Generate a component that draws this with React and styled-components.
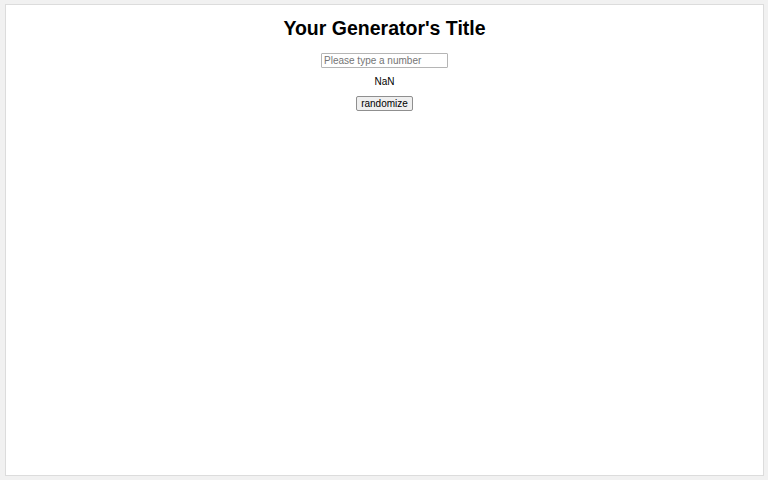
import { useState } from 'react';
import styled, { createGlobalStyle } from 'styled-components';

const GlobalStyle = createGlobalStyle`
    html, body {
        margin: 0;
        padding: 0;
        height: 100%;
        background: #f1f1f1;
        font-family: 'Liberation Sans', Arial, sans-serif;
    }
    #root {
        height: 100%;
    }
`;

const Page = styled.div`
    box-sizing: border-box;
    height: 100vh;
    padding: 4px 4px 4px 5px;
    display: flex;
`;

const Card = styled.div`
    flex: 1;
    background: #ffffff;
    border: 1px solid #dcdcdc;
    display: flex;
    flex-direction: column;
    align-items: center;
    padding-top: 12px;
`;

const Title = styled.h1`
    margin: 0;
    font-size: 19.5px;
    font-weight: 700;
    color: #000;
    line-height: 23px;
`;

const Input = styled.input`
    margin-top: 13px;
    box-sizing: border-box;
    width: 127px;
    height: 15px;
    padding: 0 2px;
    font-family: 'Liberation Sans', Arial, sans-serif;
    font-size: 10px;
    border: 1px solid #b5b5b5;
    border-radius: 1px;
    outline: none;

    &::placeholder {
        color: #757575;
    }
`;

const Result = styled.p`
    margin: 8px 0 0;
    font-size: 10px;
    line-height: 12px;
    color: #000;
`;

const Button = styled.button`
    margin-top: 8px;
    box-sizing: border-box;
    height: 15px;
    padding: 0 4px;
    font-family: 'Liberation Sans', Arial, sans-serif;
    font-size: 10px;
    line-height: 12px;
    color: #000;
    background: #efefef;
    border: 1px solid #8f8f8f;
    border-radius: 2px;
    cursor: pointer;
`;

const App = () => {
    const [value, setValue] = useState('');
    const [result, setResult] = useState(NaN);

    const randomize = () => {
        const max = parseInt(value, 10);
        setResult(Math.floor(Math.random() * max));
    };

    return (
        <>
            <GlobalStyle />
            <Page>
                <Card>
                    <Title>Your Generator's Title</Title>
                    <Input
                        type="text"
                        placeholder="Please type a number"
                        value={value}
                        onChange={(e) => setValue(e.target.value)}
                    />
                    <Result>{String(result)}</Result>
                    <Button onClick={randomize}>randomize</Button>
                </Card>
            </Page>
        </>
    );
};

export default App;
